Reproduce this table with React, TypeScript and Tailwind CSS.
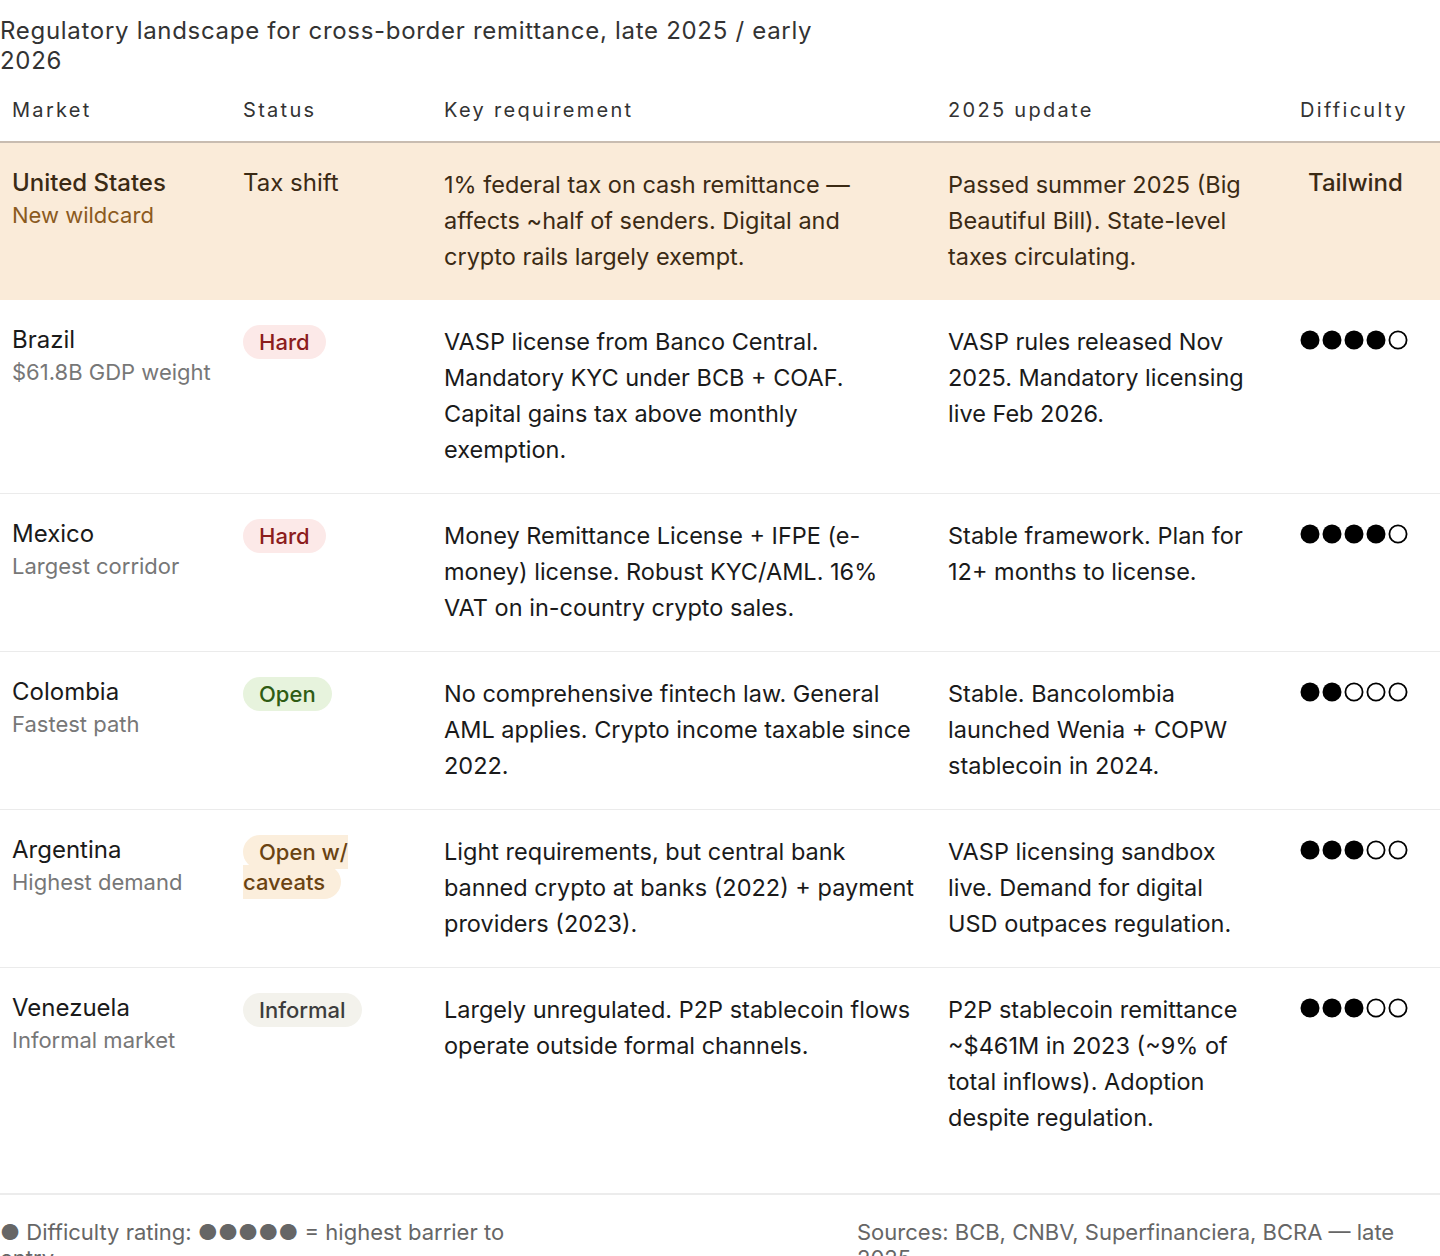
import React from 'react';

type Badge = 'hard' | 'open' | 'caveats' | 'informal';

interface Market {
  name: string;
  sub: string;
  status: string;
  badge?: Badge;
  requirement: string[];
  update: string[];
  difficulty: number | string;
  highlight?: boolean;
}

// lines are kept as in the source layout so the wraps land in the same place
const markets: Market[] = [
  {
    name: 'United States',
    sub: 'New wildcard',
    status: 'Tax shift',
    requirement: ['1% federal tax on cash remittance —', 'affects ~half of senders. Digital and', 'crypto rails largely exempt.'],
    update: ['Passed summer 2025 (Big', 'Beautiful Bill). State-level', 'taxes circulating.'],
    difficulty: 'Tailwind',
    highlight: true,
  },
  {
    name: 'Brazil',
    sub: '$61.8B GDP weight',
    status: 'Hard',
    badge: 'hard',
    requirement: ['VASP license from Banco Central.', 'Mandatory KYC under BCB + COAF.', 'Capital gains tax above monthly', 'exemption.'],
    update: ['VASP rules released Nov', '2025. Mandatory licensing', 'live Feb 2026.'],
    difficulty: 4,
  },
  {
    name: 'Mexico',
    sub: 'Largest corridor',
    status: 'Hard',
    badge: 'hard',
    requirement: ['Money Remittance License + IFPE (e-', 'money) license. Robust KYC/AML. 16%', 'VAT on in-country crypto sales.'],
    update: ['Stable framework. Plan for', '12+ months to license.'],
    difficulty: 4,
  },
  {
    name: 'Colombia',
    sub: 'Fastest path',
    status: 'Open',
    badge: 'open',
    requirement: ['No comprehensive fintech law. General', 'AML applies. Crypto income taxable since', '2022.'],
    update: ['Stable. Bancolombia', 'launched Wenia + COPW', 'stablecoin in 2024.'],
    difficulty: 2,
  },
  {
    name: 'Argentina',
    sub: 'Highest demand',
    status: 'Open w/ caveats',
    badge: 'caveats',
    requirement: ['Light requirements, but central bank', 'banned crypto at banks (2022) + payment', 'providers (2023).'],
    update: ['VASP licensing sandbox', 'live. Demand for digital', 'USD outpaces regulation.'],
    difficulty: 3,
  },
  {
    name: 'Venezuela',
    sub: 'Informal market',
    status: 'Informal',
    badge: 'informal',
    requirement: ['Largely unregulated. P2P stablecoin flows', 'operate outside formal channels.'],
    update: ['P2P stablecoin remittance', '~$461M in 2023 (~9% of', 'total inflows). Adoption', 'despite regulation.'],
    difficulty: 3,
  },
];

const badgeStyles: Record<Badge, string> = {
  hard: 'bg-[#fce9e8] text-[#8c1d1d]',
  open: 'bg-[#e7f3dd] text-[#2f5c14]',
  caveats: 'bg-[#fbeedc] text-[#6a4312]',
  informal: 'bg-[#f3f2ec] text-[#3d3d3d]',
};

function Dots({ level }: { level: number }) {
  return (
    <svg width="110" height="22" viewBox="0 0 110 22" className="block">
      {[0, 1, 2, 3, 4].map((i) =>
        i < level ? (
          <circle key={i} cx={10 + i * 22} cy={11} r={9.5} fill="#000" />
        ) : (
          <circle key={i} cx={10 + i * 22} cy={11} r={8.6} fill="none" stroke="#000" strokeWidth={1.8} />
        )
      )}
    </svg>
  );
}

function Lines({ lines }: { lines: string[] }) {
  return (
    <>
      {lines.map((l) => (
        <div key={l} className="whitespace-nowrap">
          {l}
        </div>
      ))}
    </>
  );
}

const cols = 'grid grid-cols-[231px_201px_504px_352px_152px]';

export default function App() {
  return (
    <div className="w-[1440px] bg-white pt-4 text-[#1c1c1c]" style={{ fontFamily: 'Inter, "Noto Sans", sans-serif' }}>
      <h1 className="w-[840px] text-[24px] leading-[30px] font-normal tracking-[0.7px] text-[#333]">
        Regulatory landscape for cross-border remittance, late 2025 / early 2026
      </h1>

      <div className="pb-[32px]">
        <div className={`${cols} mt-5 border-b-2 border-[#c8bcb1] pb-[17px] text-[20px] leading-[28px] tracking-[0.115em] text-[#333]`}>
          <div className="pl-3">Market</div>
          <div className="pl-3">Status</div>
          <div className="pl-3">Key requirement</div>
          <div className="pl-3">2025 update</div>
          <div className="pl-3">Difficulty</div>
        </div>

        {markets.map((m, idx) => (
          <div
            key={m.name}
            className={`${cols} pt-6 pb-[25px] text-[23.5px] leading-[36px] ${
              m.highlight ? 'bg-[#faebd9] text-[#3b2a14]' : 'text-[#1a1a1a]'
            } ${idx < markets.length - 1 && !m.highlight ? 'border-b border-[#ebebeb]' : ''}`}
          >
            <div className="pl-3 leading-[32px]">
              <div className={`text-[24px] ${m.highlight ? 'font-medium' : ''}`}>{m.name}</div>
              <div className={`text-[22px] ${m.highlight ? 'text-[#8b5a1e]' : 'text-[#777]'}`}>{m.sub}</div>
            </div>
            <div className="pl-3 pr-2">
              {m.badge ? (
                <div className="max-w-[140px] pt-[3px] text-[22px] leading-[30px]">
                  <span className={`rounded-full px-4 py-[4px] font-medium ${badgeStyles[m.badge]}`}>{m.status}</span>
                </div>
              ) : (
                <div className="text-[24px] leading-[32px]">{m.status}</div>
              )}
            </div>
            <div className="pl-3">
              <Lines lines={m.requirement} />
            </div>
            <div className="pl-3">
              <Lines lines={m.update} />
            </div>
            <div className="pl-3">
              {typeof m.difficulty === 'number' ? (
                <div className="pt-[5px]">
                  <Dots level={m.difficulty} />
                </div>
              ) : (
                <div className="pl-2 text-[24px] font-medium leading-[32px]">{m.difficulty}</div>
              )}
            </div>
          </div>
        ))}
      </div>

      <div className="flex justify-between border-t-2 border-[#ececec] pt-[24px] text-[22px] leading-[26px] text-[#666]">
        <div className="w-[540px]">● Difficulty rating: ●●●●● = highest barrier to entry</div>
        <div className="w-[583px]">Sources: BCB, CNBV, Superfinanciera, BCRA — late 2025</div>
      </div>
    </div>
  );
}
